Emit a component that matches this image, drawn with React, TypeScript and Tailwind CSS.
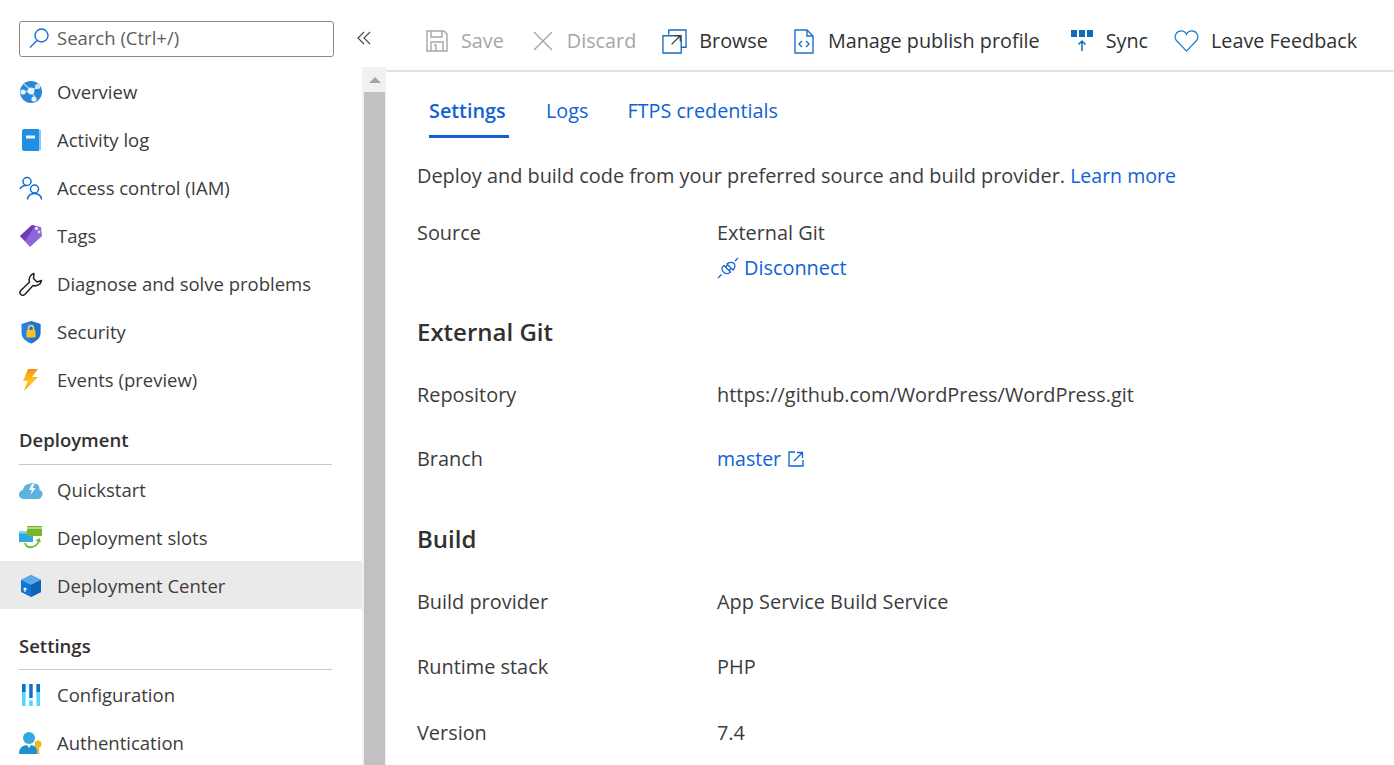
import type { ReactNode } from "react";

const FONT = "font-['Open_Sans','Noto_Sans',sans-serif]";

function OverviewIcon() {
  return (
    <svg width="24" height="24" viewBox="0 0 24 24">
      <circle cx="12" cy="12" r="11" fill="#2a87d8" />
      <path d="M5 4l7 6 9-3M3 13l9-3 4 8" stroke="#a9d4f5" strokeWidth="1.400" fill="none" />
      <circle cx="12" cy="11" r="3.400" fill="#e8f3fc" />
      <circle cx="4" cy="12" r="2.600" fill="#e8f3fc" />
      <circle cx="18.500" cy="6.500" r="2.600" fill="#cfe6f9" />
      <circle cx="15" cy="19" r="2.600" fill="#e8f3fc" />
    </svg>
  );
}

function ActivityIcon() {
  return (
    <svg width="24" height="24" viewBox="0 0 24 24">
      <path d="M3 3a2 2 0 0 1 2-2h15v22H5a2 2 0 0 1-2-2z" fill="#1f8fe3" />
      <path d="M20 2h2v20h-2z" fill="#8ec6f0" />
      <rect x="7" y="7.500" width="9" height="3" fill="#f2f8fd" />
    </svg>
  );
}

function AccessIcon() {
  return (
    <svg width="24" height="24" viewBox="0 0 24 24" fill="none" stroke="#0f6fd6" strokeWidth="1.500">
      <circle cx="8" cy="5.500" r="4" />
      <circle cx="15.500" cy="13" r="4" />
      <path d="M1 13c1-2 3-3.500 6-3.500M8.500 23.500c0-3.500 3-6 7-6s7 2.500 7 6" />
    </svg>
  );
}

function TagIcon() {
  return (
    <svg width="24" height="24" viewBox="0 0 24 24">
      <path d="M1 12L13 1l9 2 1 9-12 11z" fill="#8f66d6" />
      <path d="M1 12L13 1l3 1L6 17z" fill="#6c3cb8" />
      <circle cx="17.500" cy="4.500" r="1.400" fill="#fff" />
      <circle cx="20" cy="8" r="1.400" fill="#e4d8f6" />
    </svg>
  );
}

function WrenchIcon() {
  return (
    <svg width="24" height="24" viewBox="0 0 24 24" fill="none" stroke="#222" strokeWidth="1.500" strokeLinejoin="round">
      <path d="M15 1.500a6.500 6.500 0 0 0-4.500 8.500L1.800 18.500a2.800 2.800 0 0 0 4 4L14 13.500a6.500 6.500 0 0 0 8.500-5L18 10l-3.500-3.500z" />
    </svg>
  );
}

function ShieldIcon() {
  return (
    <svg width="24" height="24" viewBox="0 0 24 24">
      <path d="M12 1l9.500 3v9c0 5-4.500 8.500-9.500 10.500C7 21.500 2.500 18 2.500 13V4z" fill="#2a7fe0" />
      <path d="M12 1l9.500 3v9c0 5-4.500 8.500-9.500 10.500z" fill="#1565c0" opacity=".5" />
      <rect x="7.500" y="10" width="9" height="7.500" rx="1" fill="#f7c325" />
      <path d="M9.500 10V8a2.500 2.500 0 0 1 5 0v2" fill="none" stroke="#f7d35a" strokeWidth="1.500" />
    </svg>
  );
}

function BoltIcon() {
  return (
    <svg width="24" height="24" viewBox="0 0 24 24">
      <defs>
        <linearGradient id="bolt" x1="0" y1="0" x2="0" y2="1">
          <stop offset="0" stopColor="#f78d1e" />
          <stop offset=".55" stopColor="#fdc71c" />
          <stop offset="1" stopColor="#f79a1e" />
        </linearGradient>
      </defs>
      <path d="M9 1h10l-6 8h6L5 23l3.500-10H4z" fill="url(#bolt)" />
    </svg>
  );
}

function CloudIcon() {
  return (
    <svg width="24" height="24" viewBox="0 0 24 24">
      <path d="M5 21a4.500 4.500 0 0 1-1-9c.5-4 3.500-6 6-6l2-1 6 1c2 1 2.500 3 2.500 6 2 .5 3 2 3 4s-2 5-4 5z" fill="#5cb4de" />
      <path d="M13 6l-3 6h3l-1.500 5 5-7h-3l2-4z" fill="#fff" />
    </svg>
  );
}

function SlotsIcon() {
  return (
    <svg width="24" height="24" viewBox="0 0 24 24">
      <path d="M0 5h14v11H0z" fill="#2ea8e0" />
      <path d="M0 5h14v2.500H0z" fill="#8fd3f2" />
      <path d="M8 0h15v10H8z" fill="#76b82a" />
      <path d="M8 1h15v2H8z" fill="#b6d98c" />
      <path d="M6 17c1 5 10 7 14-2" fill="none" stroke="#6ebb2d" strokeWidth="1.800" />
      <path d="M16.500 14.500l4-2.500 1.500 4.500z" fill="#6ebb2d" />
    </svg>
  );
}

function BoxIcon() {
  return (
    <svg width="24" height="24" viewBox="0 0 24 24">
      <path d="M12 1l10 5v12l-10 5-10-5V6z" fill="#1374d2" />
      <path d="M12 1l10 5-10 5L2 6z" fill="#5ba8ec" />
      <path d="M12 11l10-5v12l-10 5z" fill="#0f62b5" />
      <path d="M6 18v-4M4.500 15.500L6 14l1.500 1.500" stroke="#fff" strokeWidth="1.100" fill="none" />
    </svg>
  );
}

function ConfigIcon() {
  return (
    <svg width="24" height="24" viewBox="0 0 24 24">
      <path d="M3 1h3.500v22H3zM17.500 1H21v22h-3.500zM10.200 17.500h3.500V23h-3.500z" fill="#50d5fb" />
      <path d="M3 1h3.500v8H3zM17.500 1H21v8h-3.500zM10.200 1h3.500v14h-3.500z" fill="#0f6fd0" />
    </svg>
  );
}

function AuthIcon() {
  return (
    <svg width="24" height="24" viewBox="0 0 24 24">
      <circle cx="10" cy="7" r="6" fill="#34a9e0" />
      <path d="M0 23c0-6 3-9 10-9 5 0 8 2 9 6v3z" fill="#1e90cf" />
      <path d="M8 14h4l-2 3z" fill="#fff" />
      <circle cx="19" cy="13" r="3.500" fill="#f5b324" />
      <path d="M17.800 15h2.400v8h-2.400z" fill="#f5b324" />
    </svg>
  );
}

function NavItem({ icon, label, active, className }: { icon: ReactNode; label: string; active?: boolean; className?: string }) {
  return (
    <div className={`flex h-12 items-center pl-[19px] ${active ? "bg-[#ebeaea]" : ""} ${className ?? ""}`}>
      <span className="flex w-[38px] shrink-0 items-center">{icon}</span>
      <span className="text-[18.500px] text-[#3c3c3c]">{label}</span>
    </div>
  );
}

function NavHeading({ label, className }: { label: string; className?: string }) {
  return (
    <div className={`ml-[19px] mr-[30px] flex h-[61px] items-end border-b border-[#c8c8c8] text-[18.500px] font-semibold text-[#323130] ${className ?? ""}`}>
      {label}
    </div>
  );
}

function ToolButton({ icon, label, disabled, className }: { icon: ReactNode; label: string; disabled?: boolean; className?: string }) {
  return (
    <div className={`flex items-center gap-3 text-[19.800px] ${disabled ? "text-[#a6a6a6]" : "text-[#323130]"} ${className ?? ""}`}>
      {icon}
      <span>{label}</span>
    </div>
  );
}

function Field({ label, children, className }: { label: string; children: ReactNode; className?: string }) {
  return (
    <div className={`flex text-[19.900px] text-[#3c3c3c] ${className ?? ""}`}>
      <div className="w-[300px] shrink-0">{label}</div>
      <div>{children}</div>
    </div>
  );
}

export default function App() {
  return (
    <div className={`flex h-[765px] w-[1394px] overflow-hidden bg-white ${FONT}`}>
      <aside className="w-[362px] shrink-0">
        <div className="flex h-[68px] items-start pl-[19px] pt-[21px]">
          <div className="flex h-9 w-[315px] shrink-0 items-center gap-[7px] rounded-[3px] border border-[#8a8886] pb-[2px] pl-2 text-[18.500px] text-[#605e5c]">
            <svg width="22" height="22" viewBox="0 0 22 22" fill="none" stroke="#1a6fd0" strokeWidth="1.400">
              <circle cx="13.500" cy="8.500" r="6.500" />
              <path d="M9 13.500L2 20.500" />
            </svg>
            <span>Search (Ctrl+/)</span>
          </div>
          <svg className="ml-[23px] mt-[10px] shrink-0" width="14" height="14" viewBox="0 0 14 14" fill="none" stroke="#444" strokeWidth="1.100">
            <path d="M7 1L1 7l6 6M13 1L7 7l6 6" />
          </svg>
        </div>
        <NavItem icon={<OverviewIcon />} label="Overview" />
        <NavItem icon={<ActivityIcon />} label="Activity log" />
        <NavItem icon={<AccessIcon />} label="Access control (IAM)" />
        <NavItem icon={<TagIcon />} label="Tags" />
        <NavItem icon={<WrenchIcon />} label="Diagnose and solve problems" />
        <NavItem icon={<ShieldIcon />} label="Security" />
        <NavItem icon={<BoltIcon />} label="Events (preview)" />
        <NavHeading label="Deployment" className="pb-[10px]" />
        <NavItem icon={<CloudIcon />} label="Quickstart" className="pt-[2px]" />
        <NavItem icon={<SlotsIcon />} label="Deployment slots" className="pt-[2px]" />
        <NavItem icon={<BoxIcon />} label="Deployment Center" active className="pt-[2px]" />
        <NavHeading label="Settings" className="pb-[9px]" />
        <div className="h-px" />
        <NavItem icon={<ConfigIcon />} label="Configuration" />
        <NavItem icon={<AuthIcon />} label="Authentication" />
      </aside>

      <div className="mt-[67px] flex w-[24px] shrink-0 flex-col bg-[#f1f1f1] pl-[2px] pr-[1px]">
        <div className="flex h-[25px] items-center justify-center">
          <div className="h-0 w-0 border-x-[6px] border-b-[6px] border-x-transparent border-b-[#a6a6a6]" />
        </div>
        <div className="flex-1 bg-[#c1c1c1]" />
      </div>

      <main className="min-w-0 flex-1">
        <div className="flex h-[72px] items-center border-b-2 border-[#e3e3e3] pl-[40px] pt-[12px]">
          <ToolButton
            disabled
            label="Save"
            icon={
              <svg width="23" height="22" viewBox="0 0 23 22" fill="none" stroke="#a6a6a6" strokeWidth="1.400">
                <path d="M1 1h17l3 3v17H1zM5 1v6h11V1M5 21v-9h12v9M8 15h2v6" />
              </svg>
            }
          />
          <ToolButton
            disabled
            label="Discard"
            className="ml-[28px]"
            icon={
              <svg width="23" height="22" viewBox="0 0 23 22" fill="none" stroke="#a6a6a6" strokeWidth="1.400">
                <path d="M2 2l18 18M20 2L2 20" />
              </svg>
            }
          />
          <ToolButton
            label="Browse"
            className="ml-[26px]"
            icon={
              <svg width="25" height="25" viewBox="0 0 26 26" fill="none" stroke="#1a6cb8" strokeWidth="1.400">
                <path d="M7 6V1h18v18h-5M20 7v18H1V7z" />
                <path d="M10 16l9-9M13 7h6v6" stroke="#333" strokeWidth="1.200" />
              </svg>
            }
          />
          <ToolButton
            label="Manage publish profile"
            className="ml-[25px]"
            icon={
              <svg width="23" height="25" viewBox="0 0 23 25" fill="none" stroke="#1a6fd0" strokeWidth="1.400">
                <path d="M2 1h12l6 6v17H2zM14 1v6h6" />
                <path d="M9 12l-3 3 3 3M13 12l3 3-3 3" />
              </svg>
            }
          />
          <ToolButton
            label="Sync"
            className="ml-[31px]"
            icon={
              <svg width="23" height="24" viewBox="0 0 23 24">
                <path d="M0 1h6v7H0zM8 1h6v7H8zM16 1h6v7h-6z" fill="#0f6cbd" />
                <path d="M11 22V12M7.500 15.500L11 12l3.500 3.500" fill="none" stroke="#0f6cbd" strokeWidth="1.500" />
              </svg>
            }
          />
          <ToolButton
            label="Leave Feedback"
            className="ml-[26px]"
            icon={
              <svg width="25" height="23" viewBox="0 0 26 24" fill="none" stroke="#1a7fd0" strokeWidth="1.300">
                <path d="M13 22L2.500 11C-1 6 3 1 7.500 1c2.500 0 4.500 1.500 5.500 3.500C14 2.500 16 1 18.500 1 23 1 27 6 23.500 11z" />
              </svg>
            }
          />
        </div>

        <div className="pl-[31px]">
          <div className="flex h-[66px] gap-[37px] pl-[12px] text-[19.800px] text-[#0f62d6]">
            <div className="flex h-[66px] w-[80px] items-center border-b-[3px] border-[#0f62d6] pt-[14px] font-semibold">
              Settings
            </div>
            <div className="flex h-[66px] items-center pb-[3px] pt-[14px]">Logs</div>
            <div className="ml-[2px] flex h-[66px] items-center pb-[3px] pt-[14px]">FTPS credentials</div>
          </div>

          <p className="mt-[23px] text-[19.900px] text-[#3c3c3c]">
            Deploy and build code from your preferred source and build provider.{" "}
            <span className="text-[19.500px] text-[#0f62d6]">Learn more</span>
          </p>

          <Field label="Source" className="mt-[27px]">
            <div>External Git</div>
            <div className="mt-[5px] flex items-center gap-[5px] text-[#0f62d6]">
              <svg width="22" height="22" viewBox="0 0 22 22" fill="none" stroke="#0f62d6" strokeWidth="1.300">
                <path d="M1 21l3.500-3.500M7 8.500l6.500 6.500c-2 2-5 2-7 0s-2.500-4.500.5-6.500zM8.500 10l2-2M12 13.500l2-2M10 7l6 6c2-2 2.500-5 1-6.500S12 5 10 7zM18 4l3-3" />
              </svg>
              Disconnect
            </div>
          </Field>

          <h2 className="mt-[31px] text-[24px] font-semibold text-[#323130]">External Git</h2>

          <Field label="Repository" className="mt-[30px]">
            https://github.com/WordPress/WordPress.git
          </Field>
          <Field label="Branch" className="mt-[35px]">
            <div className="flex items-center gap-[7px] text-[19.500px] text-[#0f62d6]">
              master
              <svg width="16" height="16" viewBox="0 0 16 16" fill="none" stroke="#0f62d6" strokeWidth="1.300">
                <path d="M7 1H1v14h14V9M6 10l8-8M9 1.500h5.500V7" />
              </svg>
            </div>
          </Field>

          <h2 className="mt-[47px] text-[24px] font-semibold text-[#323130]">Build</h2>

          <Field label="Build provider" className="mt-[30px]">
            App Service Build Service
          </Field>
          <Field label="Runtime stack" className="mt-[35px]">
            PHP
          </Field>
          <Field label="Version" className="mt-[36px]">
            7.4
          </Field>
        </div>
      </main>
    </div>
  );
}
